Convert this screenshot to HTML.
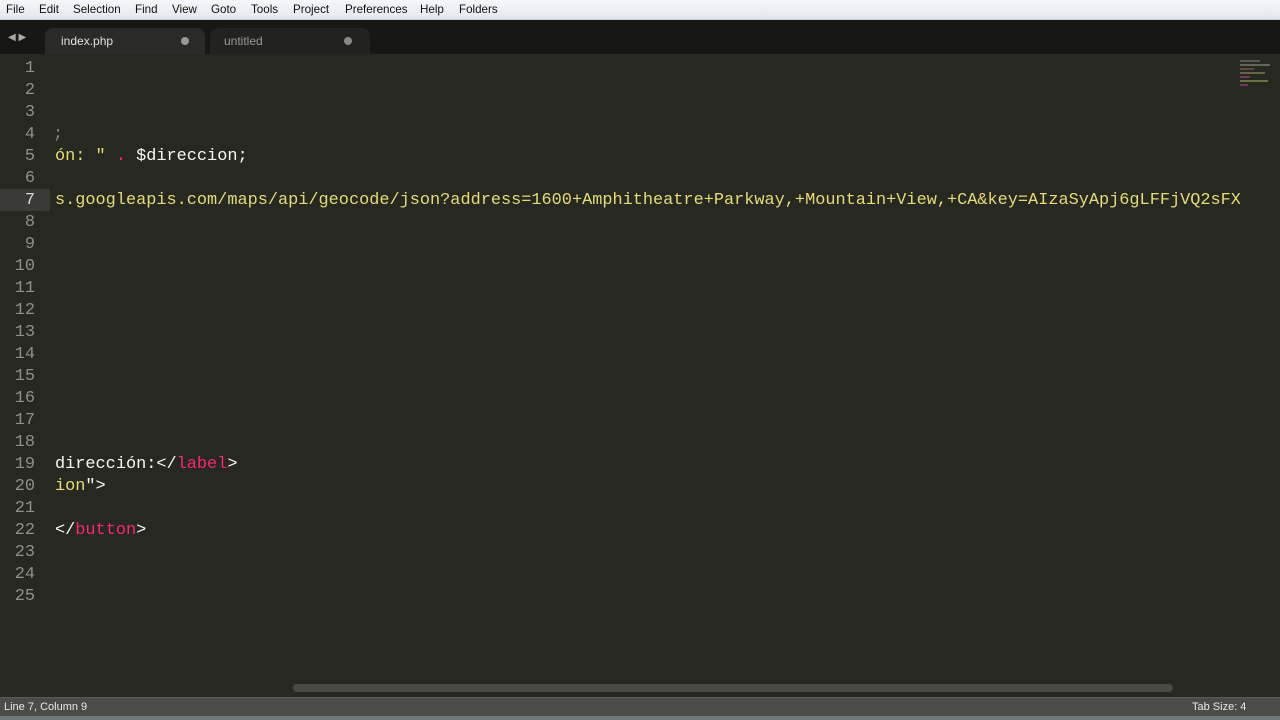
<!DOCTYPE html>
<html><head><style>
body{margin:0;width:1280px;height:720px;overflow:hidden;background:#272822;font-family:"Liberation Sans",sans-serif;position:relative}
#menu{position:absolute;left:0;top:0;width:1280px;height:19px;background:linear-gradient(#f6f7fb,#e4e7ef);border-bottom:1px solid #c8ccd6;font-size:11.6px;color:#111}
#menu span{position:absolute;top:3px}
#tabs{position:absolute;top:20px;left:0;width:1280px;height:34px;background:#171714}
.tab{position:absolute;top:8px;height:26px;border-radius:8px 8px 0 0;font-size:12px}
#ed{position:absolute;top:54px;left:0;width:1280px;height:643px;background:#272822}
.ln{position:absolute;left:0;width:35px;text-align:right;font-family:"Liberation Mono",monospace;font-size:16.9px;color:#8f908a}
#code{position:absolute;left:53px;top:0;width:1187px;height:640px;overflow:hidden}
.c{position:absolute;left:5px;font-family:"Liberation Mono",monospace;font-size:16.9px;color:#f8f8f2;white-space:pre}
.y{color:#e6db74}.p{color:#f92672}
#status{position:absolute;top:697px;left:0;width:1280px;height:19px;background:#4b4b48;border-top:1px solid #5a5a56;color:#e8e8e8;font-size:11px}
</style></head><body>
<div id="menu">
<span style="left:6px">File</span><span style="left:39px">Edit</span><span style="left:73px">Selection</span><span style="left:135px">Find</span><span style="left:172px">View</span><span style="left:211px">Goto</span><span style="left:251px">Tools</span><span style="left:293px">Project</span><span style="left:345px">Preferences</span><span style="left:420px">Help</span><span style="left:459px">Folders</span>
</div>
<div id="tabs">
<div style="position:absolute;left:8px;top:12px;color:#aaa;font-size:10px">◀ ▶</div>
<div class="tab" style="left:45px;width:160px;background:#2a2a26;color:#e0e0e0"><span style="position:absolute;left:16px;top:6px">index.php</span><span style="position:absolute;left:136px;top:9px;width:8px;height:8px;border-radius:4px;background:#999"></span></div>
<div class="tab" style="left:210px;width:160px;background:#22221f;color:#9a9a96"><span style="position:absolute;left:14px;top:6px">untitled</span><span style="position:absolute;left:134px;top:9px;width:8px;height:8px;border-radius:4px;background:#888"></span></div>
</div>
<div id="ed">
<div style="position:absolute;left:0;top:135px;width:50px;height:22px;background:#3a3a36"></div>
<div class="ln" style="top:5px">1</div><div class="ln" style="top:27px">2</div><div class="ln" style="top:49px">3</div><div class="ln" style="top:71px">4</div><div class="ln" style="top:93px">5</div><div class="ln" style="top:115px">6</div><div class="ln" style="top:137px;color:#d8d8d2">7</div><div class="ln" style="top:159px">8</div><div class="ln" style="top:181px">9</div><div class="ln" style="top:203px">10</div><div class="ln" style="top:225px">11</div><div class="ln" style="top:247px">12</div><div class="ln" style="top:269px">13</div><div class="ln" style="top:291px">14</div><div class="ln" style="top:313px">15</div><div class="ln" style="top:335px">16</div><div class="ln" style="top:357px">17</div><div class="ln" style="top:379px">18</div><div class="ln" style="top:401px">19</div><div class="ln" style="top:423px">20</div><div class="ln" style="top:445px">21</div><div class="ln" style="top:467px">22</div><div class="ln" style="top:489px">23</div><div class="ln" style="top:511px">24</div><div class="ln" style="top:533px">25</div>
<div id="code">
<div class="c" style="top:71px;left:0px;color:#888">;</div>
<div class="c" style="top:93px;left:2px"><span class="y">ón: " </span><span class="p">.</span> $direccion;</div>
<div class="c y" style="top:137px;left:2px">s.googleapis.com/maps/api/geocode/json?address=1600+Amphitheatre+Parkway,+Mountain+View,+CA&amp;key=AIzaSyApj6gLFFjVQ2sFX</div>
<div class="c" style="top:401px;left:2px">dirección:&lt;/<span class="p">label</span>&gt;</div>
<div class="c" style="top:423px;left:2px"><span class="y">ion</span>"&gt;</div>
<div class="c" style="top:467px;left:2px">&lt;/<span class="p">button</span>&gt;</div>
</div>
<div style="position:absolute;left:1240px;top:4px;width:40px;height:50px;opacity:.5">
<div style="height:2px;width:20px;background:#888;margin:2px 0"></div><div style="height:2px;width:30px;background:#9a8;margin:2px 0"></div><div style="height:2px;width:14px;background:#a66;margin:2px 0"></div><div style="height:2px;width:25px;background:#9a6;margin:2px 0"></div><div style="height:2px;width:10px;background:#c48;margin:2px 0"></div><div style="height:2px;width:28px;background:#ab6;margin:2px 0"></div><div style="height:2px;width:8px;background:#c48;margin:2px 0"></div>
</div>
<div style="position:absolute;left:293px;top:630px;width:880px;height:8px;border-radius:4px;background:#4a4a47"></div>
</div>
<div id="status"><span style="position:absolute;left:4px;top:3px">Line 7, Column 9</span><span style="position:absolute;left:1192px;top:3px">Tab Size: 4</span></div>
<div style="position:absolute;top:716px;left:0;width:1280px;height:4px;background:#6a7a7a"></div>
</body></html>
